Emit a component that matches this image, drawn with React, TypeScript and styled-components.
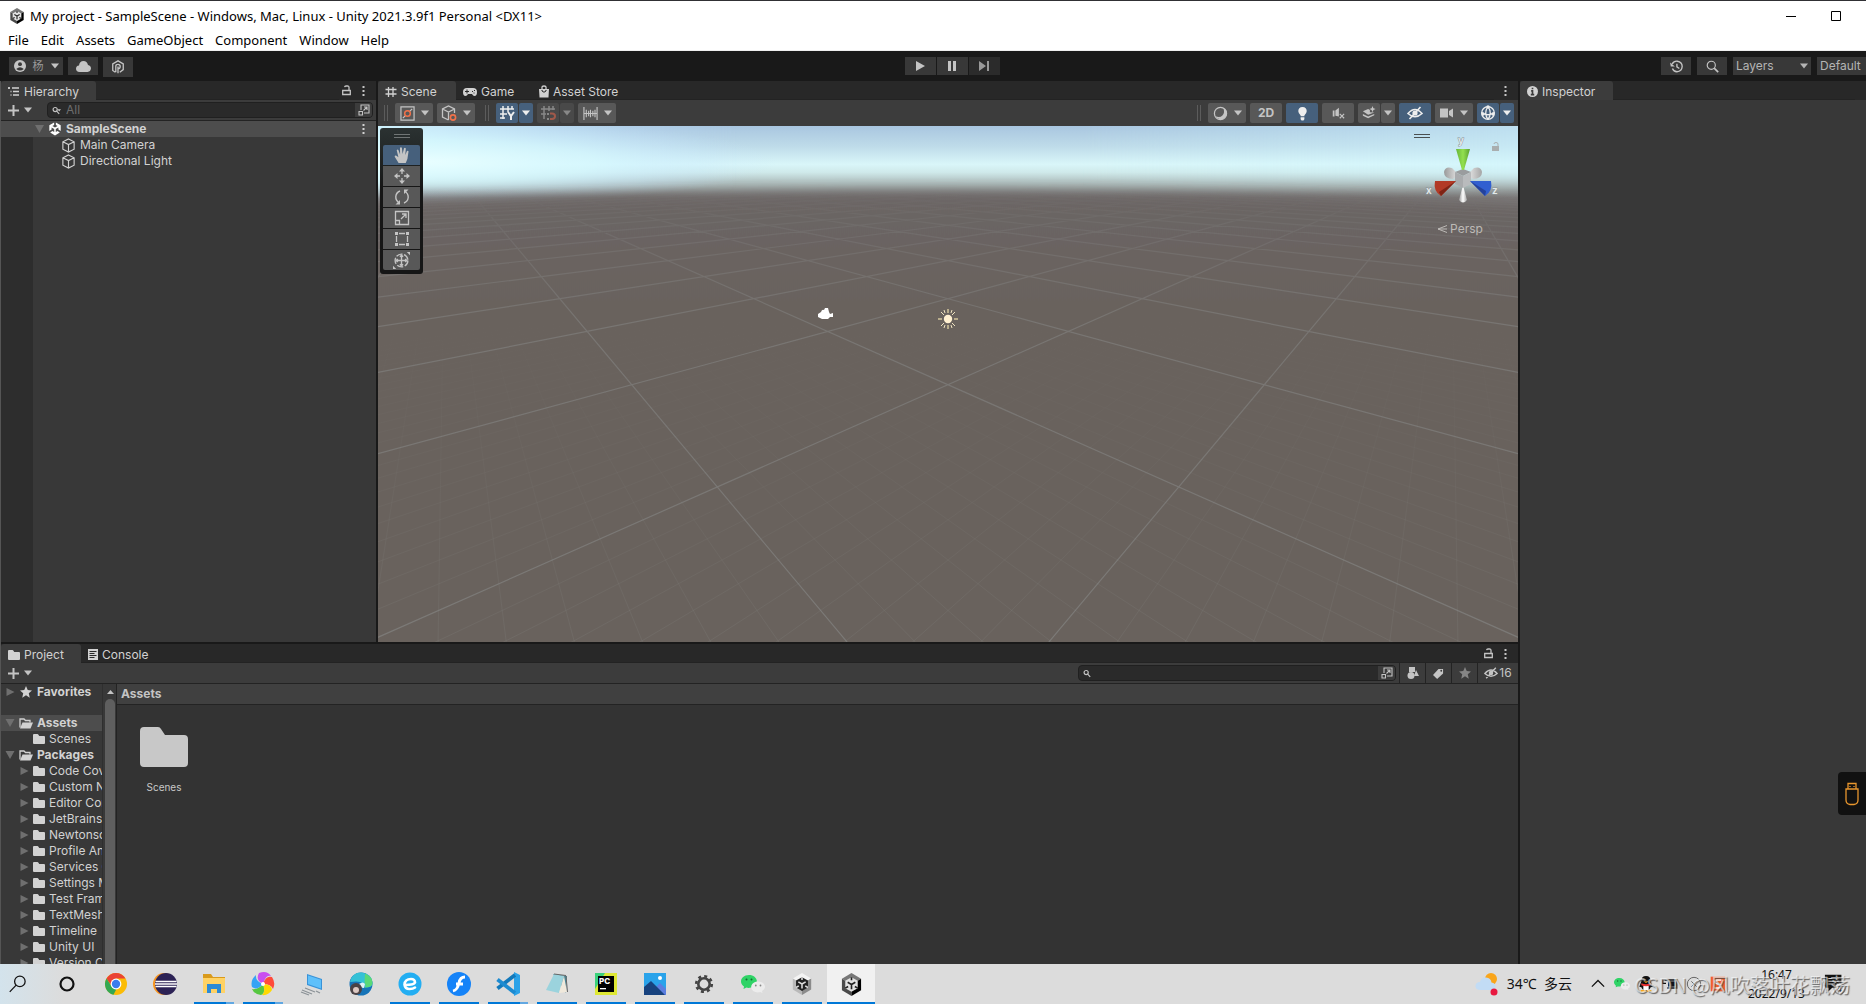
import React from "react";
import styled, { createGlobalStyle, css } from "styled-components";

const c = {
  chrome: "#191919",
  tabbar: "#282828",
  panel: "#383838",
  bar: "#3c3c3c",
  btn: "#585858",
  blue: "#46607c",
  text: "#d2d2d2",
  icon: "#c4c4c4",
  line: "#232323",
  row: "#4d4d4d",
  orange: "#f0714a",
};

const ui = `Inter, "Noto Sans CJK SC", sans-serif`;
const sys = `"Noto Sans", "Noto Sans CJK SC", sans-serif`;

const Global = createGlobalStyle`
  *, *::before, *::after { box-sizing: border-box; }
  html, body { margin: 0; background: ${c.chrome}; }
  body { overflow: hidden; font: 12px/16px ${ui}; color: ${c.text}; }
  button, input, select { font: inherit; color: inherit; margin: 0; padding: 0; border: 0; background: none; border-radius: 0; outline: none; }
  svg { display: block; flex: none; }
`;

/* ---------- shell ---------- */

const Desktop = styled.div`
  height: 100vh;
  min-height: 700px;
  display: flex;
  flex-direction: column;
  overflow: hidden;
  position: relative;
`;
const TitleBar = styled.header`
  flex: none;
  height: 30px;
  border-top: 1px solid #303034;
  background: #fff;
  color: #000;
  font: 13px/16px ${sys};
  display: flex;
  align-items: center;
  gap: 5px;
  padding: 0 16px 0 9px;
`;
const Title = styled.span`
  flex: 1;
  white-space: nowrap;
`;
const CaptionButtons = styled.div`
  display: flex;
  gap: 17px;
`;
const CaptionButton = styled.button`
  width: 28px;
  height: 28px;
  display: grid;
  place-items: center;
`;
const MenuBar = styled.nav`
  flex: none;
  height: 21px;
  background: #fff;
  border-bottom: 1px solid #eee;
  color: #000;
  font: 13px/16px ${sys};
  display: flex;
  align-items: center;
  gap: 12px;
  padding-left: 8px;
`;
const MenuItem = styled.button``;

/* The editor window is a little wider than the screen, as when dragged past its edge. */
const MainToolbar = styled.div`
  flex: none;
  width: calc(100% + 40px);
  height: 30px;
  padding: 6px 11px 0 9px;
  background: ${c.chrome};
  display: grid;
  grid-template-columns: 1fr auto 1fr;
  align-items: start;
`;
const BarGroup = styled.div<{ $gap?: number; $end?: boolean }>`
  display: flex;
  gap: ${(p) => p.$gap ?? 6}px;
  justify-content: ${(p) => (p.$end ? "flex-end" : "flex-start")};
`;
const DarkButton = styled.button<{ $w: number; $dim?: boolean; $h?: number }>`
  width: ${(p) => p.$w}px;
  height: ${(p) => p.$h ?? 18}px;
  background: ${(p) => (p.$dim ? "#2b2b2b" : c.panel)};
  color: ${(p) => (p.$dim ? "#999" : c.icon)};
  display: flex;
  align-items: center;
  justify-content: center;
  gap: 7px;
`;
const AccountName = styled.span`
  font-size: 11px;
  color: #999;
`;
const SelectWrap = styled.label`
  position: relative;
  display: block;
  width: 78px;
  height: 18px;
  background: ${c.panel};
  color: #b4b4b4;
  svg {
    position: absolute;
    right: 3px;
    top: 6px;
    pointer-events: none;
  }
`;
const Select = styled.select`
  appearance: none;
  width: 100%;
  height: 18px;
  padding-left: 3px;
  line-height: 18px;
`;

const Editor = styled.main`
  flex: 1;
  min-height: 0;
  display: flex;
  gap: 2px;
  border-left: 1px solid #555;
  background: ${c.chrome};
`;
const LeftStack = styled.div`
  flex: 1;
  min-width: 0;
  display: flex;
  flex-direction: column;
  gap: 2px;
`;
const UpperRow = styled.div`
  flex: 1;
  min-height: 0;
  display: flex;
  gap: 2px;
`;
const Panel = styled.section<{ $w?: number; $h?: number }>`
  flex: ${(p) => (p.$w || p.$h ? "none" : 1)};
  min-width: 0;
  width: ${(p) => (p.$w ? p.$w + "px" : "auto")};
  height: ${(p) => (p.$h ? p.$h + "px" : "auto")};
  background: ${c.panel};
  display: flex;
  flex-direction: column;
  overflow: hidden;
`;
const TabBar = styled.div`
  flex: none;
  height: 19px;
  background: ${c.tabbar};
  display: flex;
  padding-right: 11px;
`;
const Tab = styled.button<{ $on?: boolean; $w: number }>`
  width: ${(p) => p.$w}px;
  height: 19px;
  padding: 3px 0 0 7px;
  display: flex;
  align-items: center;
  gap: 4px;
  border-radius: 3px 3px 0 0;
  border-bottom: 1px solid ${(p) => (p.$on ? c.bar : c.line)};
  background: ${(p) => (p.$on ? c.bar : "transparent")};
  color: ${c.text};
  white-space: nowrap;
`;
const TabFill = styled.div`
  flex: 1;
  border-bottom: 1px solid ${c.line};
`;
const TabTool = styled.button`
  width: 13px;
  display: grid;
  place-items: center end;
  color: ${c.icon};
`;
const ToolRow = styled.div<{ $h: number }>`
  flex: none;
  height: ${(p) => p.$h}px;
  background: ${c.bar};
  display: flex;
  align-items: center;
`;
const AddButton = styled.button`
  width: 46px;
  height: 20px;
  padding-left: 6px;
  display: flex;
  align-items: center;
  gap: 4px;
  color: ${c.icon};
`;
const SearchBox = styled.label<{ $max: number }>`
  flex: 1;
  max-width: ${(p) => p.$max}px;
  height: 16px;
  margin-right: 3px;
  border: 1px solid #202020;
  border-radius: 4px;
  background: #2a2a2a;
  display: flex;
  align-items: center;
  gap: 5px;
  padding-left: 4px;
  overflow: hidden;
  color: ${c.icon};
`;
const SearchInput = styled.input`
  flex: 1;
  min-width: 0;
  height: 14px;
  &::placeholder {
    color: #6e6e6e;
    opacity: 1;
  }
`;
const SearchExpand = styled.button`
  width: 17px;
  height: 14px;
  background: ${c.bar};
  display: grid;
  place-items: center;
  color: ${c.icon};
`;

/* ---------- hierarchy ---------- */

const HierarchyBody = styled.div`
  flex: 1;
  border-top: 1px solid ${c.line};
  background: linear-gradient(to right, #2d2d2d 32px, ${c.panel} 32px);
`;
const HRow = styled.div<{ $root?: boolean }>`
  height: 16px;
  padding: 0 11px 0 ${(p) => (p.$root ? 33 : 60)}px;
  display: flex;
  align-items: center;
  gap: 4px;
  background: ${(p) => (p.$root ? c.row : "transparent")};
  font-weight: ${(p) => (p.$root ? 700 : 400)};
  span {
    flex: 1;
  }
`;

/* ---------- scene ---------- */

const Grip = styled.span`
  width: 4px;
  height: 16px;
  border: solid #5c5c5c;
  border-width: 0 1px;
`;
const SceneTools = styled(ToolRow)`
  padding: 0 4px 0 6px;
  gap: 4px;
  justify-content: space-between;
`;
const SceneGroup = styled.div`
  display: flex;
  align-items: center;
  gap: 4px;
  ${Grip} {
    margin: 0 3px 0 0;
  }
  button + ${Grip} {
    margin: 0 3px 0 6px;
  }
`;
const SceneButton = styled.button<{ $w: number; $on?: boolean; $off?: boolean }>`
  width: ${(p) => p.$w}px;
  height: 20px;
  border-radius: 2px;
  background: ${(p) => (p.$on ? c.blue : p.$off ? "#494949" : c.btn)};
  color: ${(p) => (p.$on ? "#eee" : p.$off ? "#888" : c.icon)};
  display: flex;
  align-items: center;
  justify-content: center;
  gap: 6px;
  font-weight: 700;
`;
const Split = styled.span`
  display: flex;
  gap: 1px;
`;
const Viewport = styled.div`
  flex: 1;
  min-height: 0;
  position: relative;
  overflow: hidden;
  background: #69625d;
`;
const SceneArt = styled.svg`
  position: absolute;
  inset: 0;
  width: 100%;
  height: 100%;
`;
const ToolPalette = styled.div`
  position: absolute;
  left: 2px;
  top: 2px;
  width: 43px;
  padding: 17px 3px 4px;
  border-radius: 3px;
  background: linear-gradient(#2b3232, #161616 60px);
  display: flex;
  flex-direction: column;
  gap: 1px;
  &::before {
    content: "";
    position: absolute;
    top: 6px;
    left: 14px;
    width: 16px;
    height: 4px;
    border: solid #707575;
    border-width: 1px 0;
  }
`;
const PaletteButton = styled.button<{ $on?: boolean }>`
  height: 20px;
  background: ${(p) => (p.$on ? c.blue : c.btn)};
  color: ${c.icon};
  display: grid;
  place-items: center;
  &:first-child {
    border-radius: 2px 2px 0 0;
  }
  &:last-child {
    border-radius: 0 0 2px 2px;
  }
`;
const Gizmo = styled.div`
  position: absolute;
  right: 4px;
  top: 6px;
  width: 102px;
  display: flex;
  flex-direction: column;
`;
const Projection = styled.button`
  align-self: center;
  margin-top: 3px;
  padding-right: 6px;
  display: flex;
  align-items: center;
  gap: 3px;
  color: #bdbab6;
`;

/* ---------- project ---------- */

const IconCell = styled.button<{ $w: number }>`
  width: ${(p) => p.$w}px;
  height: 20px;
  border-left: 1px solid ${c.line};
  display: flex;
  align-items: center;
  justify-content: center;
  gap: 1px;
  color: ${c.icon};
`;
const Spacer = styled.div`
  flex: 1;
`;
const ProjectBody = styled.div`
  flex: 1;
  min-height: 0;
  border-top: 1px solid ${c.line};
  display: flex;
`;
const Tree = styled.div`
  width: 101px;
  overflow: hidden;
`;
const TreeRow = styled.div<{ $child?: boolean; $on?: boolean; $gap?: boolean }>`
  height: 16px;
  margin-bottom: ${(p) => (p.$gap ? 15 : 0)}px;
  padding-left: ${(p) => (p.$child ? 17 : 3)}px;
  display: flex;
  align-items: center;
  gap: ${(p) => (p.$child ? 4 : 4)}px;
  background: ${(p) => (p.$on ? c.row : "transparent")};
  font-weight: ${(p) => (p.$child ? 400 : 700)};
  white-space: nowrap;
  svg:first-child {
    width: 11px;
  }
`;
const ScrollTrack = styled.div`
  width: 14px;
  border-left: 1px solid #2f2f2f;
  padding: 6px 0 0 1px;
  display: flex;
  flex-direction: column;
  align-items: center;
  gap: 5px;
  color: ${c.icon};
`;
const ScrollThumb = styled.div`
  flex: 1;
  width: 10px;
  border-radius: 5px 5px 0 0;
  background: #5f5f5f;
`;
const AssetPane = styled.div`
  flex: 1;
  border-left: 1px solid ${c.line};
  background: #333;
`;
const Breadcrumb = styled.div`
  height: 21px;
  padding: 2px 4px;
  background: #404040;
  border-bottom: 1px solid ${c.line};
  font-weight: 700;
  color: #c4c4c4;
`;
const AssetGrid = styled.div`
  padding: 22px 19px;
  display: flex;
`;
const Asset = styled.button`
  width: 56px;
  display: flex;
  flex-direction: column;
  align-items: center;
  gap: 12px;
  font-size: 10px;
  color: #c8c8c8;
`;

/* ---------- desktop overlays ---------- */

const SideWidget = styled.button`
  position: absolute;
  right: 0;
  top: 772px;
  width: 28px;
  height: 43px;
  border-radius: 4px 0 0 4px;
  background: #111;
  display: grid;
  place-items: center;
`;
const Taskbar = styled.footer`
  flex: none;
  height: 40px;
  background: linear-gradient(to right, #d3e3ec, #dcdcdc 64px);
  color: #111;
  font: 14px/20px ${sys};
  display: flex;
  position: relative;
`;
const TaskButton = styled.button<{ $run?: boolean; $multi?: boolean; $on?: boolean; $first?: boolean }>`
  width: ${(p) => (p.$first ? 43 : 48)}px;
  margin-right: ${(p) => (p.$first ? 0 : 1)}px;
  height: 40px;
  padding-right: ${(p) => (p.$first ? 7 : 0)}px;
  display: grid;
  place-items: center;
  background: ${(p) => (p.$on ? "#f1f1f1" : "transparent")};
  position: relative;
  ${(p) =>
    p.$run &&
    css`
      &::after {
        content: "";
        position: absolute;
        bottom: 0;
        left: ${p.$on ? 0 : 4}px;
        right: ${p.$on ? 0 : 4}px;
        height: 2px;
        background: ${p.$multi ? "linear-gradient(to right, #0078d7 32px, #62a8e2 32px)" : "#0078d7"};
      }
    `}
`;
const Tray = styled.div`
  display: flex;
  align-items: center;
  padding-right: 19px;
`;
const Weather = styled.button`
  display: flex;
  align-items: center;
  gap: 8px;
  margin-right: 14px;
`;
const TrayButton = styled.button`
  width: 24px;
  height: 40px;
  display: grid;
  place-items: center;
`;
const Clock = styled.time`
  width: 93px;
  text-align: center;
  font-size: 12px;
  line-height: 19px;
`;
const Watermark = styled.div`
  position: absolute;
  right: 16px;
  bottom: 5px;
  font: 20px/28px "Noto Sans CJK SC", sans-serif;
  color: rgba(255, 255, 255, 0.6);
  text-shadow: 1px 1px 1px rgba(70, 70, 70, 0.8);
  pointer-events: none;
  white-space: nowrap;
`;

/* ---------- icons ---------- */

type IP = { s?: number; w?: number; h?: number; box?: string; children: React.ReactNode };
const I = ({ s = 16, w, h, box = "0 0 16 16", children }: IP) => (
  <svg width={w ?? s} height={h ?? s} viewBox={box} fill="none" stroke="currentColor" strokeWidth="1.3" aria-hidden="true">
    {children}
  </svg>
);
const fill = { fill: "currentColor", stroke: "none" };

const Down = () => <I w={8} h={6} box="0 0 8 6"><path {...fill} d="M0 .5h8L4 5.5z" /></I>;
const Fold = ({ open, hide }: { open?: boolean; hide?: boolean }) => (
  <I s={10} box="0 0 10 10"><path fill={hide ? "none" : "#6f6f6f"} stroke="none" d={open ? "M1 1h9L5.500 9z" : "M2 1l8 4-8 4z"} /></I>
);
const Dots = () => <I w={3} h={12} box="0 0 3 12"><path {...fill} d="M.5 1h2v2h-2zM.5 5h2v2h-2zM.5 9h2v2h-2z" /></I>;
const Lock = ({ s = 11 }: { s?: number }) => <I s={s} box="0 0 11 11"><path d="M1.700 5.500h7.600v4H1.700zM8 5.500V2.500Q8 1 6.500 1H5Q3.800 1 3.600 2.200" /></I>;
const Plus = () => <I s={13} box="0 0 13 13"><path strokeWidth="2" d="M6.500 1v11M1 6.500h11" /></I>;
const Mag = ({ arrow }: { arrow?: boolean }) => (
  <I s={9} box="0 0 10 10"><circle cx="3.500" cy="4" r="2.300" /><path d="M5.200 5.700L8 8.800" />{arrow && <path {...fill} d="M6 3.500h4L8 6z" />}</I>
);
const Expand = () => <I s={12} box="0 0 12 12"><path d="M3 6V1h8v8H6M1 7.500h3.500V11H1zM5.500 6.500L9 3M6 3h3v3" strokeWidth="1.100" /></I>;
const Cube = ({ s = 15 }: { s?: number }) => <I s={s}><path strokeWidth="1.200" d="M8 1l6 3v8l-6 3-6-3V4zM2 4l6 3 6-3M8 7v8" /></I>;
const UnityMark = ({ s = 14 }: { s?: number }) => (
  <I s={s}><path fill="#fff" stroke="none" d="M7 .5v3L5 4.600l3 1.700 3-1.700-2-1.100v-3l5.500 3.200v6.500l-2.600-1.500V6.300L8.900 8v3.500l2-1.100 2.600 1.500L8 15.500l-5.500-3.600 2.600-1.500 2 1.100V8L4.100 6.300v2.400l-2.600 1.500V3.700z" /></I>
);
const HierIcon = () => <I s={12} box="0 0 12 12"><path d="M4 2h7M5 5.500h6M5 9h6M1 1v2M0 2h2M2.500 5.500h1M2.500 9h1" /></I>;
const Hash = () => <I s={12} box="0 0 12 12"><path d="M3.500 1v10M8 1v10M0.500 3.500h11M.5 8h11" /></I>;
const Pad = () => (
  <I w={14} h={10} box="0 0 14 10"><path {...fill} d="M4 1h6q4 0 4 4 0 4-2.500 4Q10 9 9 7H5Q4 9 2.500 9 0 9 0 5q0-4 4-4z" /><path stroke="#282828" strokeWidth="1" d="M2 4.500h4M4 2.500v4M9 4.500h1M11 3.500h1M10.500 6h1" /></I>
);
const Bag = () => <I w={12} h={13} box="-2 0 12 13"><path {...fill} d="M0 4h10l-.5 8.500h-9z" /><path d="M3 6V2q0-1 2-1t2 1v4" /><path stroke="#282828" strokeWidth="1" d="M3 5v1q2 2.500 4 0V5" /></I>;
const Info = () => <I s={11}><circle {...fill} cx="8" cy="8" r="8" /><path stroke="#3c3c3c" strokeWidth="2.400" d="M8 2.500v2.300M6 7h2v5M5.500 12.500h5" /></I>;
const Folder = ({ w = 12 }: { w?: number }) => <I w={w} h={(w * 10) / 12} box="0 0 48 40"><path {...fill} d="M4 0h14q2 0 3 2l4 6h19q4 0 4 4v24q0 4-4 4H4q-4 0-4-4V4q0-4 4-4z" /></I>;
const OpenFolder = () => <I w={14} h={11} box="0 0 14 11"><path d="M1 9.500V1h4l1.500 1.500H11V4.500" /><path {...fill} d="M3.500 4.500H14L11.500 10.500H1z" /></I>;
const Star = ({ dim, s = 12 }: { dim?: boolean; s?: number }) => <I w={dim ? s : 14} h={s}><path fill={dim ? "#858585" : "currentColor"} stroke="none" d="M8 0l2.300 5.400 5.700.5-4.300 3.900L13 15.500 8 12.400l-5 3.100 1.300-5.700L0 5.900l5.700-.5z" /></I>;
const Page = () => <I w={10} h={11} box="0 0 10 11"><path {...fill} d="M0 0h10v11H0z" /><path stroke="#282828" strokeWidth="1" d="M1.500 2.500h7M1.500 4.500h5M1.500 6.500h7M1.500 8.500h5" /></I>;
const EyeOff = ({ s = 14 }: { s?: number }) => <I s={s}><path strokeWidth="1.600" d="M1 8.500q7-8 14 0-7 6.500-14 0zM13.500 2l-11 12" /><circle {...fill} cx="8" cy="8" r="2.600" /></I>;

const HexLogo = ({ s = 14, light }: { s?: number; light?: boolean }) => (
  <svg width={s} height={s} viewBox="0 0 24 24" aria-hidden="true">
    <path fill={light ? "#f4f4f4" : "#777"} d="M12 0l10 6-10 6L2 6z" />
    <path fill={light ? "#b9b9b9" : "#4a4a4a"} d="M2 6l10 6v12L2 18z" />
    <path fill={light ? "#8b8b8b" : "#000"} d="M22 6L12 12v12l10-6z" />
    <path fill={light ? "#222" : "#e2e2e2"} d="M12 4.500l6.500 3.700v7.600L12 19.500l-6.500-3.700V8.200z" />
    <path stroke={light ? "#ddd" : "#222"} strokeWidth="1.700" fill="none" d="M12 12v5M12 12L8 9.700M12 12l4-2.300M12 4.500v3M5.500 15.800l3-1.700M18.500 15.800l-3-1.700" />
  </svg>
);

/* ---------- scene drawing ---------- */

const CX = 570;
const HORIZON = 36;
const DEPTH0 = 0.00449;
const STEP = 0.002825;
const SPREAD = 1.42;

/* One ground line: from its vanishing point on the horizon to a point close under the camera. */
function groundLine(i: number, side: 1 | -1) {
  const t = 0.0006;
  const s = (t - DEPTH0) / STEP;
  const u = i - s;
  return `M${CX - (side * SPREAD) / STEP} ${HORIZON}L${(CX + (side * SPREAD * u) / t).toFixed(1)} ${(HORIZON + 1 / t).toFixed(1)}`;
}
function gridPath(from: number, to: number, step: number) {
  const out: string[] = [];
  for (let n = Math.round(from / step); n <= Math.round(to / step); n++) {
    out.push(groundLine(n * step, 1), groundLine(n * step, -1));
  }
  return out.join("");
}
const MAJOR = gridPath(-4, 26, 1);
const MINOR = gridPath(-3, 2.5, 0.1);

const Scene = () => (
  <SceneArt viewBox="0 0 1140 516" preserveAspectRatio="xMidYMid slice" aria-label="Scene view">
    <defs>
      <linearGradient id="sky" x1="0" y1="0" x2="0" y2="80" gradientUnits="userSpaceOnUse">
        <stop offset="0" stopColor="#a9c6e0" />
        <stop offset=".25" stopColor="#bedbe9" />
        <stop offset=".48" stopColor="#d9f6f9" />
        <stop offset=".58" stopColor="#cfe9ea" />
        <stop offset=".75" stopColor="#a4b0af" />
        <stop offset=".9" stopColor="#7b7878" />
      </linearGradient>
      <radialGradient id="glow" cx="40" cy="40" r="360" gradientUnits="userSpaceOnUse" gradientTransform="matrix(1 0 0 .12 0 31)">
        <stop offset="0" stopColor="#eaffff" stopOpacity=".95" />
        <stop offset=".5" stopColor="#d8fbff" stopOpacity=".6" />
        <stop offset="1" stopColor="#c4e4ff" stopOpacity="0" />
      </radialGradient>
      <linearGradient id="glowL" x1="0" x2="360" y1="0" y2="0" gradientUnits="userSpaceOnUse">
        <stop offset="0" stopColor="#d4f8ff" stopOpacity=".9" />
        <stop offset="1" stopColor="#c0e0ff" stopOpacity="0" />
      </linearGradient>
      <linearGradient id="glowR" x1="700" x2="1140" y1="0" y2="0" gradientUnits="userSpaceOnUse">
        <stop offset="0" stopColor="#d0f6ff" stopOpacity="0" />
        <stop offset="1" stopColor="#d0f6ff" stopOpacity=".5" />
      </linearGradient>
      <filter id="haze" x="-10%" y="-10%" width="120%" height="120%"><feGaussianBlur stdDeviation="0 6" /></filter>
      <filter id="soft" x="-10%" y="-50%" width="120%" height="200%"><feGaussianBlur stdDeviation="0 6" /></filter>
      <linearGradient id="ground" x1="0" y1="60" x2="0" y2="180" gradientUnits="userSpaceOnUse">
        <stop offset="0" stopColor="#6c6666" />
        <stop offset="1" stopColor="#69625d" />
      </linearGradient>
      <linearGradient id="major" x1="0" y1="62" x2="0" y2="200" gradientUnits="userSpaceOnUse">
        <stop offset="0" stopColor="#8d9090" stopOpacity="0" />
        <stop offset=".3" stopColor="#8d9090" stopOpacity=".18" />
        <stop offset="1" stopColor="#8d9090" stopOpacity=".42" />
      </linearGradient>
      <linearGradient id="minor" x1="0" y1="190" x2="0" y2="516" gradientUnits="userSpaceOnUse">
        <stop offset="0" stopColor="#80807c" stopOpacity="0" />
        <stop offset=".5" stopColor="#80807c" stopOpacity=".12" />
        <stop offset="1" stopColor="#80807c" stopOpacity=".26" />
      </linearGradient>
    </defs>
    <path fill="url(#sky)" d="M0 0h1140v110H0z" />
    <path fill="url(#glowL)" filter="url(#soft)" d="M0-30h400V58H0z" />
    <path fill="url(#glow)" d="M0 0h500v110H0z" />
    <path fill="url(#glowR)" filter="url(#soft)" d="M700-30h440V56H700z" />
    <path fill="url(#ground)" filter="url(#haze)" d="M-60 80Q570 52 1200 80V560H-60z" />
    <path fill="none" stroke="url(#minor)" d={MINOR} />
    <path fill="none" stroke="url(#major)" strokeWidth="1.200" d={MAJOR} />
    <path fill="#fff" d="M440 188l3-2q1-3 3-2l1-2h3l1 4 1 2 3-1v4h-3l-2 2h-6l-4-2z" />
    <g stroke="#b9ad8c" strokeWidth="2">
      <path d="M570 183v4M570 199v4M560 193h4M576 193h4" />
      <path strokeWidth="1" stroke="#f0e4c0" d="M563 186l3 3M574 197l3 3M577 186l-3 3M566 197l-3 3M566 184l1 3M574 184l-1 3M566 202l1-3M574 202l-1-3" />
      <circle cx="570" cy="193" r="4.200" fill="#fff0d0" stroke="none" />
    </g>
  </SceneArt>
);

const GizmoArt = () => (
  <svg width="102" height="86" viewBox="0 0 102 86" aria-label="Orientation gizmo">
    <defs>
      <linearGradient id="gw"><stop stopColor="#999" /><stop offset=".5" stopColor="#fff" /><stop offset="1" stopColor="#a5a5a5" /></linearGradient>
      <linearGradient id="gg"><stop stopColor="#67b53a" /><stop offset=".5" stopColor="#93e04f" /><stop offset="1" stopColor="#5aa02f" /></linearGradient>
    </defs>
    <path stroke="#4a4f50" strokeWidth="1" d="M2 2.500h16M2 5.500h16" />
    <g fill="#a9aeaf"><path d="M80 14h7v5h-7z" /><path fill="none" stroke="#a9aeaf" d="M86 14v-2q0-1.500-2-1.500T82 12" /></g>
    <g fill="#e4eaeb" stroke="#8c9496" strokeWidth="1" paintOrder="stroke" fontFamily="Inter, sans-serif" fontSize="10" fontWeight="600">
      <text x="46" y="12">y</text><text x="14" y="62">x</text><text x="80" y="62">z</text>
    </g>
    <path fill="url(#gw)" d="M32 40q1-6 8-4l7 7-6 4q-9 0-9-7zM70 40q-1-6-8-4l-7 7 6 4q9 0 9-7z" />
    <path fill="url(#gw)" d="M51 53l4 15q-4 5-8 0z" />
    <path fill="#9a9c9e" d="M51 37l8 3-8 4-8-4z" /><path fill="#a9abad" d="M43 40l8 4v12l-8-4z" /><path fill="#b9bbbd" d="M59 40l-8 4v12l8-4z" />
    <path fill="url(#gg)" d="M44 17h14l-6 21h-2z" />
    <path fill="#b23a26" d="M23 49l21 0L29 64q-8-5-6-15z" /><path fill="#7f2416" d="M44 49L29 64l-2-4z" />
    <path fill="#315fd0" d="M79 49H58l15 15q8-5 6-15z" /><path fill="#24429c" d="M58 49l15 15 1-5z" />
  </svg>
);

/* ---------- palette and toolbar glyphs ---------- */

const Hand = () => <I s={18}><path {...fill} d="M5 15L1.500 9.500q0-1.400 1.600-.8L4.800 10 3.300 3.800q.8-1.300 1.600 0L6.300 7.500 6.200 1.600q.9-1.200 1.700 0L8.500 7 9.800 2q1-.9 1.600.3L10.900 8l1.500-3.600q1.100-.7 1.400.5L12.800 11.500 11.300 15z" /></I>;
const Move = () => <I s={16}><path {...fill} d="M8 0l3 3.500H5zM8 16l3-3.500H5zM0 8l3.500-3v6zM16 8l-3.500-3v6z" /><path d="M8 3v3M8 10v3M3 8h3M10 8h3" /></I>;
const Rotate = () => <I s={16}><path strokeWidth="1.400" d="M5.500 14Q1.500 11.500 1.800 7.500 2.200 3.500 6 2M10.500 2q4 2.500 3.700 6.500-.4 4-4.200 5.500" /><path {...fill} d="M1.500 15.500h4.500v-4.500zM14.500 .5H10v4.500z" /></I>;
const Scale = () => <I s={16}><path d="M1.500 1.500h13v13h-13zM1.500 10.500h4v4M7 9l4.500-4.500M8 4h4v4" /></I>;
const Rect = () => <I s={16}><path d="M5 2.500h6M5 13.500h6M2.500 5v6M13.500 5v6" /><path {...fill} d="M1 1h3v3H1zM12 1h3v3h-3zM1 12h3v3H1zM12 12h3v3h-3z" /></I>;
const Transform = () => <I s={17}><circle cx="8" cy="8" r="6" strokeDasharray="6 1.500" /><path d="M8 3v10M3 8h10M6.500 4.500L8 3l1.500 1.500M6.500 11.500L8 13l1.500-1.500M4.500 6.500L3 8l1.500 1.500M11.500 6.500L13 8l-1.500 1.500" /><path {...fill} d="M16 0v3l-3-3zM0 16v-3l3 3z" /></I>;

const Pivot = () => <I s={15}><path d="M1 1h14v14H1z" /><path d="M3 13l3-3M10 6l3-3" /><circle cx="8" cy="8" r="3" stroke={c.orange} strokeWidth="1.600" /></I>;
const LocalCube = () => <I s={16}><path d="M7.500 15L1.500 12V4l6-3 6 3v4M1.500 4l6 3 6-3M7.500 7v8" /><circle cx="12" cy="12.500" r="2.600" stroke={c.orange} strokeWidth="1.600" /></I>;
const GridY = () => <I s={16}><path strokeWidth="1.500" d="M4 1v13M9 1v6M13 1v3M1 4h14M1 9h7M1 13h5" /><path strokeWidth="2" d="M9 7l3 4 3-4M12 11v4" /></I>;
const Snap = () => <I s={16}><path strokeWidth="1.500" d="M4 1v13M9 1v5M13 1v4M1 4h14M1 9h5" /><path stroke="#a1594a" strokeWidth="2" d="M10 8.500h2q3 0 3 2.700T12 14h-2" /><path {...fill} d="M7 8h2v2H7zM7 13h2v2H7z" /></I>;
const Ruler = () => <I s={15}><path strokeWidth="1.200" d="M1 1v14M15 1v14M1 8h14M3.500 4v8M6 5v6M8 4v8M10.500 5v6M12.800 4v8" /></I>;
const Sphere = () => <I s={15}><circle cx="8" cy="8" r="6.500" /><path {...fill} d="M11 2q4 2 4 6-1 6-7 6.500Q4 14 2.500 11q5 2 7.500-1 3-3 1-8z" /></I>;
const Bulb = () => <I s={15}><path {...fill} d="M8 1q4.500.3 4.500 4.500Q12.300 8 10 10v1H6v-1Q3.700 8 3.500 5.500 3.500 1.300 8 1zM6 12h4v2l-1 1.500H7L6 14z" /></I>;
const Mute = () => <I s={14}><path {...fill} d="M2 5h2v7H2zM5 5l4-3v10l-4-1z" /><path d="M10 9l5 5M15 9l-5 5" /></I>;
const Layers = () => <I s={14}><path {...fill} d="M1 6l6-2.500 2 1L9 7l5 .5L7 10zM1 9l6 3 7-3v1.500L7 14l-6-3zM12 0l1 2.500L15.500 3.500 13 4.500 12 7l-1-2.500-2.500-1 2.500-1z" /></I>;
const Camera = () => <I w={14} h={12} box="0 0 14 12"><path {...fill} d="M0 1.500h8v9H0zM9 4l4-2.500v9L9 8z" /></I>;
const Globe = () => <I s={16}><circle cx="8" cy="8" r="6.300" /><path d="M8 1.500Q3.500 8 8 14.500M8 1.500q4.500 6.500 0 13M1.500 7.500Q8 12 14.500 7.500" /><circle {...fill} cx="3" cy="9" r="1.700" /><circle {...fill} cx="13" cy="9" r="1.700" /><circle {...fill} cx="8" cy="2" r="1.700" /></I>;

/* ---------- taskbar logos ---------- */

const T = ({ children, s = 24 }: { children: React.ReactNode; s?: number }) => <svg width={s} height={s} viewBox="0 0 24 24" fill="none" aria-hidden="true">{children}</svg>;
const WeChat = ({ s }: { s?: number }) => <T s={s}><path fill="#2fd366" d="M8 3c-5 0-8 3-8 6.500 0 2 1.200 3.800 3 5L2.500 17l3-1.400c3 1 10-.6 10.500-6.100C15.500 5.500 12.500 3 8 3z" /><path fill="#ececec" d="M17 9.500c-4 0-6.800 2.500-6.800 5.500 0 4 4.800 6.400 9 5l2.300 1-.5-2c1.500-1.200 3-2.300 3-4.300-.2-3-3-5.200-7-5.200z" /><g fill="#156b33"><circle cx="5.500" cy="7.500" r="1" /><circle cx="10.500" cy="7.500" r="1" /></g><g fill="#888"><circle cx="14.800" cy="13.500" r=".9" /><circle cx="19.500" cy="13.500" r=".9" /></g></T>;

const tasks: { name: string; run?: boolean; multi?: boolean; on?: boolean; art: React.ReactNode }[] = [
  { name: "Task view", art: <T><circle cx="12" cy="12" r="6.500" stroke="#111" strokeWidth="2.200" /></T> },
  { name: "Chrome", art: <T><circle cx="12" cy="12" r="11" fill="#fbbc05" /><path fill="#ea4335" d="M2.500 6.500a11 11 0 0119 0H12L7 13z" /><path fill="#34a853" d="M2.500 6.500L8 15l5 1-3.500 6.800A11 11 0 012.500 6.500z" /><circle cx="12" cy="12" r="5.400" fill="#fff" /><circle cx="12" cy="12" r="4.200" fill="#3b7ded" /></T> },
  { name: "Eclipse", art: <T><circle cx="11" cy="12" r="11" fill="#f7941e" /><circle cx="13" cy="12" r="11" fill="#2c2255" /><path stroke="#fff" strokeWidth="1.300" d="M2.500 9.500h21M2 12h22M2.500 14.500h21" /></T> },
  { name: "File Explorer", run: true, multi: true, art: <T><path fill="#d99a1c" d="M1 2h8l2 3h12v4H1z" /><path fill="#ffd264" d="M1 6h22v15H1z" /><path fill="#2b8ad6" d="M5 12h14v9h-4v-4H9v4H5z" /></T> },
  { name: "Browser", run: true, multi: true, art: <T><path fill="#c94ff0" d="M12 12Q4 8 8 1q8-3 12 3-5-2-8 8z" /><path fill="#ff4b3a" d="M12 12q3-9 9-7 4 6 1 12-2-5-10-5z" /><path fill="#ffd800" d="M12 12q9 0 9 6-4 6-10 5 4-4 1-11z" /><path fill="#56c740" d="M12 12q3 9-2 11-7-1-9-6 6 1 11-5z" /><path fill="#35a3f5" d="M12 12q-6 7-11 3Q-1 8 5 3q-1 6 7 9z" /><circle cx="12" cy="12" r="2" fill="#fff" /></T> },
  { name: "This PC", art: <T><path fill="#3a93d8" d="M7 2l15 5v11L7 13z" /><path fill="#5fc0fa" d="M8 3.500l13 4.300v8.600L8 12z" /><path stroke="#8b9297" strokeWidth="1.200" d="M5 16l10 4M2 18l10 4M1 20l8 3M16 19l4 2" /></T> },
  { name: "Edge", art: <T><circle cx="12" cy="12" r="11.500" fill="#1674b8" /><path fill="#35c1d6" d="M1 10Q3 0 13 .5 23 2 23.500 11q0 5-8 4.500 0-8-14.500-5.500z" /><path fill="#5ad877" d="M16 1.500q8 3.500 7.500 10-.5 4-8 4 2-2 0-5z" /><path fill="#dff1f5" d="M10 12q4-3 6 0l-1 4q-4 0-5-4z" /><circle cx="7" cy="17" r="6" fill="#4a4245" /><circle cx="7" cy="18" r="3" fill="#dcc8c2" /></T> },
  { name: "360 Browser", run: true, art: <T><circle cx="12" cy="12" r="11.500" fill="#23aef2" /><path stroke="#fff" strokeWidth="2.600" strokeLinecap="round" d="M7 13q9 0 10-2.500Q17 7 13 7q-6 0-6.500 5.500Q7 17 11.500 17q3.500 0 5.500-1.500" /></T> },
  { name: "Flash", run: true, art: <T><circle cx="12" cy="12" r="12" fill="#1583f8" /><path stroke="#fff" strokeWidth="2.800" d="M18 5q-5 0-6 6-1.500 7-6 8M9 12h7" /></T> },
  { name: "VS Code", run: true, multi: true, art: <T><path fill="#2ba2e8" d="M18 0l6 3v18l-6 3z" /><path stroke="#1279bb" strokeWidth="3.800" d="M19 3L1.500 16.500" /><path stroke="#1d8bd1" strokeWidth="3.800" d="M1.500 7.500L19 21" /></T> },
  { name: "Notepad", run: true, art: <T><path fill="#4b8797" d="M8 2l14 2-1 17z" /><path fill="#9bd3dd" d="M9 2l10 2-5 17-13-3z" /><path fill="#f0e9dc" d="M19 4l3 16-8 1z" /><path stroke="#666" strokeWidth="1" d="M9 2l12 1.500M21 4l1.500 16" /></T> },
  { name: "PyCharm", run: true, art: <T><path fill="#dfe835" d="M1 1h22v22H1z" /><path fill="#3bd17c" d="M1 1h10L1 17z" /><path fill="#000" d="M4 4h16v16H4z" /><text x="5" y="12" fontFamily="Inter, sans-serif" fontWeight="800" fontSize="8" fill="#fff">PC</text><path fill="#fff" d="M6 16h6v1.300H6z" /></T> },
  { name: "Photos", run: true, art: <T><path fill="#2aa3ea" d="M1 1h22v22H1z" /><path fill="#5b7ee0" d="M12 16l5-5 6 6v6h-8z" /><path fill="#17427e" d="M1 15l7-6 14 14H1z" /><circle cx="17" cy="6" r="2" fill="#fff" /></T> },
  { name: "Settings", run: true, art: <T><circle cx="12" cy="12" r="5.700" stroke="#444" strokeWidth="2.600" /><circle cx="12" cy="12" r="7.800" stroke="#444" strokeWidth="2.600" strokeDasharray="3 3.120" /></T> },
  { name: "WeChat", run: true, art: <WeChat /> },
  { name: "Unity Hub", run: true, art: <HexLogo s={22} light /> },
  { name: "Unity", run: true, on: true, art: <HexLogo s={23} /> },
];

const packages = ["Code Coverage", "Custom NUnit", "Editor Coroutines", "JetBrains Rider Editor", "Newtonsoft Json", "Profile Analyzer", "Services Core", "Settings Manager", "Test Framework", "TextMeshPro", "Timeline", "Unity UI", "Version Control"];
const palette: [string, React.ReactNode][] = [["View", <Hand />], ["Move", <Move />], ["Rotate", <Rotate />], ["Scale", <Scale />], ["Rect", <Rect />], ["Transform", <Transform />]];

export default function App() {
  return (
    <Desktop>
      <Global />
      <TitleBar>
        <HexLogo s={16} />
        <Title>My project - SampleScene - Windows, Mac, Linux - Unity 2021.3.9f1 Personal &lt;DX11&gt;</Title>
        <CaptionButtons>
          <CaptionButton aria-label="Minimize"><I s={10} box="0 0 10 10"><path strokeWidth="1" d="M0 5.500h10" /></I></CaptionButton>
          <CaptionButton aria-label="Maximize"><I s={10} box="0 0 10 10"><path strokeWidth="1" d="M.5.500h9v9h-9z" /></I></CaptionButton>
        </CaptionButtons>
      </TitleBar>
      <MenuBar>
        {["File", "Edit", "Assets", "GameObject", "Component", "Window", "Help"].map((m) => <MenuItem key={m}>{m}</MenuItem>)}
      </MenuBar>

      <MainToolbar>
        <BarGroup $gap={5}>
          <DarkButton $w={54} aria-label="Account">
            <I s={12}><circle {...fill} cx="8" cy="8" r="8" /><circle cx="8" cy="5.500" r="2.600" fill="#383838" stroke="none" /><path fill="#383838" stroke="none" d="M3 12q5-5 10 0-5 4-10 0z" /></I>
            <AccountName>杨</AccountName>
            <Down />
          </DarkButton>
          <DarkButton $w={30} aria-label="Cloud"><I w={15} h={11} box="0 0 15 11"><path {...fill} d="M3.500 11Q0 10.500 0 7.700 0 5 3 4.600 3.500 0 7.500 0q3.500 0 4.500 4 3 .5 3 3.500-.3 3-3.500 3.500z" /></I></DarkButton>
          <DarkButton $w={30} $h={20} aria-label="Version Control"><I s={14}><path strokeWidth="1.500" d="M5 14L2 12V4.500l6-3.500 6 3.500V11l-4 3M5.500 14V7q0-2 2.500-2t2.500 2.500T8 10M8 7.500V15" /></I></DarkButton>
        </BarGroup>
        <BarGroup $gap={1}>
          <DarkButton $w={31} aria-label="Play"><I w={9} h={10} box="0 0 9 10"><path {...fill} d="M0 0l9 5-9 5z" /></I></DarkButton>
          <DarkButton $w={31} aria-label="Pause"><I w={8} h={10} box="0 0 8 10"><path {...fill} d="M0 0h3v10H0zM5 0h3v10H5z" /></I></DarkButton>
          <DarkButton $w={31} $dim aria-label="Step"><I w={10} h={10} box="0 0 10 10"><path {...fill} d="M0 0l7 5-7 5zM8 0h2v10H8z" /></I></DarkButton>
        </BarGroup>
        <BarGroup $end>
          <DarkButton $w={30} aria-label="History"><I s={13}><path strokeWidth="1.700" d="M2.500 5Q5 1 9 1.500q6 1 6 6.500-.5 6-6.500 6.500-4 0-5.500-4M8.500 4.500V8.500l3 2" /><path {...fill} d="M0 3l1 5h5z" /></I></DarkButton>
          <DarkButton $w={30} aria-label="Search"><I s={13}><circle cx="6.500" cy="6.500" r="5" strokeWidth="1.400" /><path strokeWidth="2" d="M10 10l5 5" /></I></DarkButton>
          <SelectWrap><Select aria-label="Layers"><option>Layers</option></Select><Down /></SelectWrap>
          <SelectWrap><Select aria-label="Layout"><option>Default</option></Select><Down /></SelectWrap>
        </BarGroup>
      </MainToolbar>

      <Editor>
        <LeftStack>
          <UpperRow>
            <Panel $w={375}>
              <TabBar>
                <Tab $on $w={95}><HierIcon />Hierarchy</Tab>
                <TabFill />
                <TabTool aria-label="Lock"><Lock /></TabTool>
                <TabTool aria-label="Hierarchy menu"><Dots /></TabTool>
              </TabBar>
              <ToolRow $h={20}>
                <AddButton aria-label="Add object"><Plus /><Down /></AddButton>
                <SearchBox $max={326}><Mag arrow /><SearchInput placeholder="All" aria-label="Search hierarchy" /><SearchExpand aria-label="Open search"><Expand /></SearchExpand></SearchBox>
              </ToolRow>
              <HierarchyBody>
                <HRow $root><Fold open /><UnityMark /><span>SampleScene</span><Dots /></HRow>
                <HRow><Cube /><span>Main Camera</span></HRow>
                <HRow><Cube /><span>Directional Light</span></HRow>
              </HierarchyBody>
            </Panel>

            <Panel>
              <TabBar>
                <Tab $on $w={78}><Hash />Scene</Tab>
                <Tab $w={74}><Pad />Game</Tab>
                <Tab $w={95}><Bag />Asset Store</Tab>
                <TabFill />
                <TabTool aria-label="Scene menu"><Dots /></TabTool>
              </TabBar>
              <SceneTools $h={26}>
                <SceneGroup>
                  <Grip />
                  <SceneButton $w={38} aria-label="Pivot mode"><Pivot /><Down /></SceneButton>
                  <SceneButton $w={38} aria-label="Handle rotation"><LocalCube /><Down /></SceneButton>
                  <Grip />
                  <Split><SceneButton $w={22} $on aria-label="Grid"><GridY /></SceneButton><SceneButton $w={14} $on aria-label="Grid options"><Down /></SceneButton></Split>
                  <Split><SceneButton $w={22} $off aria-label="Snap"><Snap /></SceneButton><SceneButton $w={14} $off aria-label="Snap options"><Down /></SceneButton></Split>
                  <SceneButton $w={38} aria-label="Snap increment"><Ruler /><Down /></SceneButton>
                </SceneGroup>
                <SceneGroup>
                  <Grip />
                  <SceneButton $w={38} aria-label="Draw mode"><Sphere /><Down /></SceneButton>
                  <SceneButton $w={32}>2D</SceneButton>
                  <SceneButton $w={32} $on aria-label="Lighting"><Bulb /></SceneButton>
                  <SceneButton $w={32} aria-label="Audio"><Mute /></SceneButton>
                  <Split><SceneButton $w={22} aria-label="Effects"><Layers /></SceneButton><SceneButton $w={14} aria-label="Effects options"><Down /></SceneButton></Split>
                  <SceneButton $w={32} $on aria-label="Scene visibility"><EyeOff s={16} /></SceneButton>
                  <SceneButton $w={38} aria-label="Camera settings"><Camera /><Down /></SceneButton>
                  <Split><SceneButton $w={22} $on aria-label="Gizmos"><Globe /></SceneButton><SceneButton $w={14} $on aria-label="Gizmo options"><Down /></SceneButton></Split>
                </SceneGroup>
              </SceneTools>
              <Viewport>
                <Scene />
                <ToolPalette>
                  {palette.map(([name, icon], n) => <PaletteButton key={name} $on={n === 0} aria-label={name}>{icon}</PaletteButton>)}
                </ToolPalette>
                <Gizmo>
                  <GizmoArt />
                  <Projection><I w={10} h={8} box="0 0 10 8"><path strokeWidth="1" d="M10 .5L1 4l9 3.500M1 4h9" /></I>Persp</Projection>
                </Gizmo>
              </Viewport>
            </Panel>
          </UpperRow>

          <Panel $h={320}>
            <TabBar>
              <Tab $on $w={80}><Folder />Project</Tab>
              <Tab $w={80}><Page />Console</Tab>
              <TabFill />
              <TabTool aria-label="Lock"><Lock /></TabTool>
              <TabTool aria-label="Project menu"><Dots /></TabTool>
            </TabBar>
            <ToolRow $h={20}>
              <AddButton aria-label="Create asset"><Plus /><Down /></AddButton>
              <Spacer />
              <SearchBox $max={318}><Mag /><SearchInput aria-label="Search project" /><SearchExpand aria-label="Open search"><Expand /></SearchExpand></SearchBox>
              <IconCell $w={26} aria-label="Search by type"><I s={12} box="0 0 12 12"><path {...fill} d="M2 0h6v5H2zM9 3l3 6H7z" /><circle {...fill} cx="4" cy="8.500" r="3.500" /></I></IconCell>
              <IconCell $w={26} aria-label="Search by label"><I s={11} box="0 0 12 12"><path {...fill} d="M6 1h5v5l-6.500 6L0 7.500z" /><circle cx="9" cy="3" r="1" fill="#3c3c3c" stroke="none" /></I></IconCell>
              <IconCell $w={26} aria-label="Save search"><Star dim /></IconCell>
              <IconCell $w={41} aria-label="Hidden packages"><EyeOff />16</IconCell>
            </ToolRow>
            <ProjectBody>
              <Tree>
                <TreeRow $gap><Fold /><Star />Favorites</TreeRow>
                <TreeRow $on><Fold open /><OpenFolder />Assets</TreeRow>
                <TreeRow $child><Fold hide /><Folder />Scenes</TreeRow>
                <TreeRow><Fold open /><OpenFolder />Packages</TreeRow>
                {packages.map((p) => <TreeRow key={p} $child><Fold /><Folder />{p}</TreeRow>)}
              </Tree>
              <ScrollTrack><I w={7} h={4} box="0 0 7 4"><path {...fill} d="M3.500 0L7 4H0z" /></I><ScrollThumb /></ScrollTrack>
              <AssetPane>
                <Breadcrumb>Assets</Breadcrumb>
                <AssetGrid><Asset><Folder w={48} />Scenes</Asset></AssetGrid>
              </AssetPane>
            </ProjectBody>
          </Panel>
        </LeftStack>

        <Panel $w={346}>
          <TabBar><Tab $on $w={93}><Info />Inspector</Tab><TabFill /></TabBar>
        </Panel>
      </Editor>

      <SideWidget aria-label="USB device">
        <svg width="14" height="24" viewBox="0 0 14 24" fill="none" stroke="#e8962e" strokeWidth="1.300"><path d="M3 7V1.500h8V7M1 7h12v11q0 4-4 4.500H5Q1 22 1 18zM5 4v1M9 4v1" /></svg>
      </SideWidget>

      <Taskbar>
        <TaskButton $first aria-label="Search"><T s={18}><circle cx="14.500" cy="8.500" r="7" stroke="#111" strokeWidth="1.700" /><path stroke="#111" strokeWidth="1.700" d="M9.500 13.500L1 22.500" /></T></TaskButton>
        {tasks.map((t) => <TaskButton key={t.name} $run={t.run} $multi={t.multi} $on={t.on} aria-label={t.name}>{t.art}</TaskButton>)}
        <Spacer />
        <Tray>
          <Weather><T><circle cx="16" cy="7" r="6" fill="#f9a51a" /><path fill="#c2dcf5" d="M5 18q-5-.5-4.500-4.500Q1 10 5 10q1-5 6-4.500 5 .5 5.500 5 4 .5 4 4-.5 3.500-4 3.500z" /><circle cx="19" cy="20" r="3.500" fill="#e81840" /></T>34℃&nbsp; 多云</Weather>
          <TrayButton aria-label="Show hidden icons"><I s={14}><path strokeWidth="1.500" d="M1 11l7-7 7 7" /></I></TrayButton>
          <TrayButton aria-label="WeChat messages"><WeChat s={16} /></TrayButton>
          <TrayButton aria-label="QQ"><T s={16}><path fill="#111" d="M12 0q7 0 7 8l3 8-3 1q-2 5-7 5t-7-5l-3-1 3-8q0-8 7-8z" /><path fill="#fff" d="M8 15h8v6H8z" /><path fill="#e33" d="M5 11q7 3 14 0v3q-7 3-14 0z" /><path fill="#f6a81c" d="M8 8h8l-4 2.500zM4 21h7v3H4zM13 21h7v3h-7z" /></T></TrayButton>
          <TrayButton aria-label="Battery"><T s={16}><path stroke="#111" strokeWidth="2" d="M4 6h18v12H8M1 5v6h5" /><path fill="#111" d="M9 8h11v8H9z" /></T></TrayButton>
          <TrayButton aria-label="Network"><T s={16}><circle cx="12" cy="12" r="10" stroke="#666" strokeWidth="1.500" /><path stroke="#666" strokeWidth="1.500" d="M8 8l8 8M16 8l-8 8" /></T></TrayButton>
          <TrayButton aria-label="Input method"><T s={16}><path fill="#f2602a" d="M1 1h22v22H1z" /><path stroke="#fff" strokeWidth="2.500" d="M17 6H9q-4 3 0 5l6 2q3 3-1 5H6" /></T></TrayButton>
          <Clock>16:47<br />2022/9/13</Clock>
          <TrayButton aria-label="Notifications"><T s={22}><path fill="#111" d="M1 2h18v14H9l-4 4v-4H1z" /><path stroke="#ddd" strokeWidth="1.300" d="M4 6h12M4 9h12M4 12h8" /><circle cx="17" cy="17" r="6" fill="#ddd" stroke="#666" /><text x="14" y="21" fontSize="10" fill="#111" fontFamily="Noto Sans, sans-serif">4</text></T></TrayButton>
        </Tray>
        <Watermark>CSDN @风吹落叶花飘荡</Watermark>
      </Taskbar>
    </Desktop>
  );
}
